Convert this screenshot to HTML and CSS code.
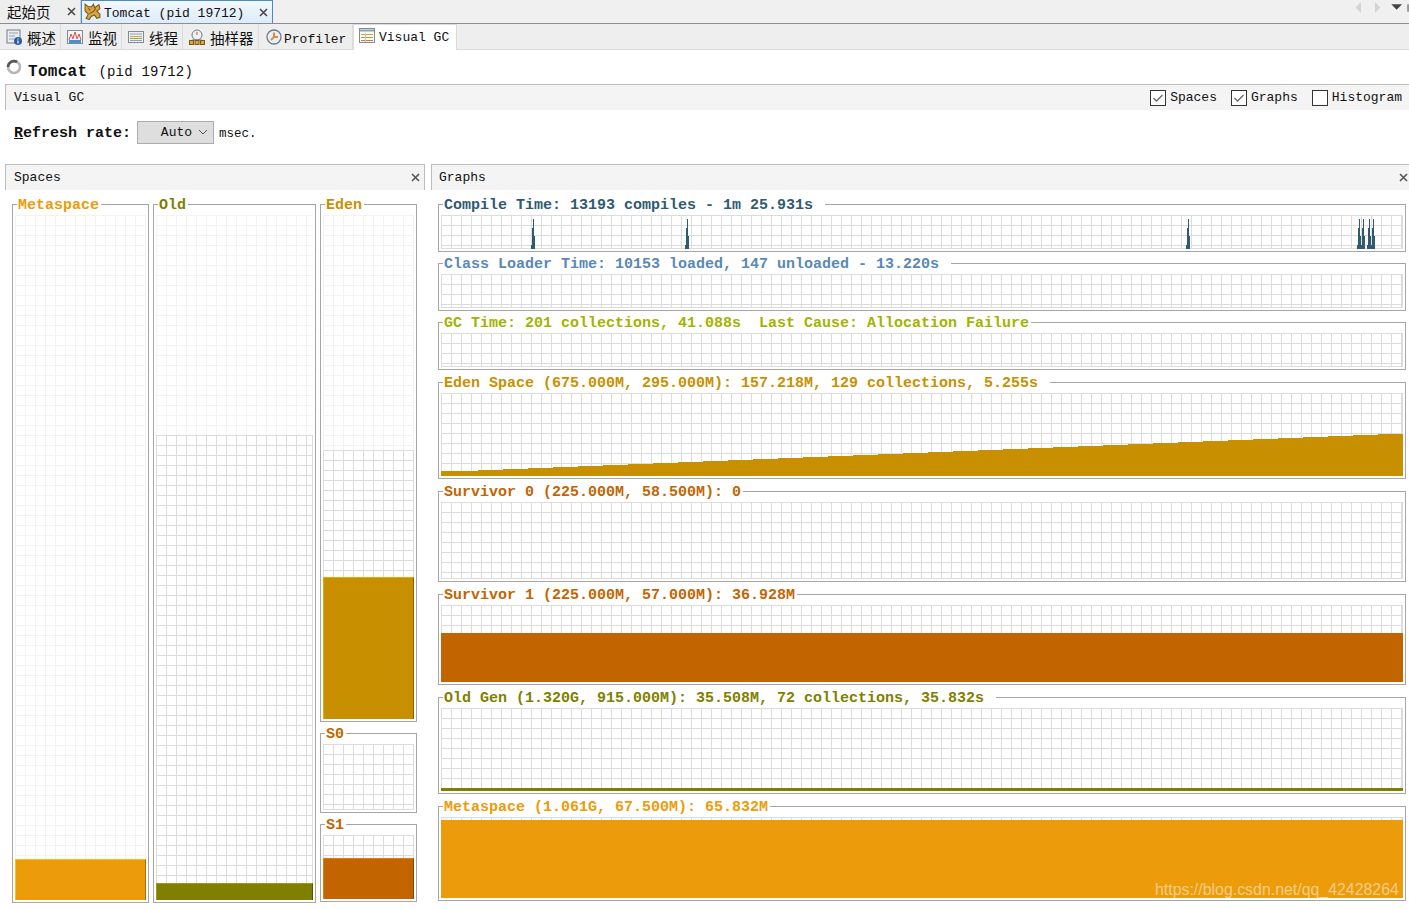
FILE: index.html
```html
<!DOCTYPE html>
<html lang="zh">
<head>
<meta charset="utf-8">
<title>Tomcat (pid 19712) - Visual GC</title>
<link rel="stylesheet" href="styles.css">
</head>
<body>
<svg class="defs" width="0" height="0"><defs><path id="spike" d="M0 34V30H1V13H2V4H3V21H4V34Z"/></defs></svg>

<header class="doc-tabs">
  <div class="doc-tab first"><span class="cjk">起始页</span><svg class="close" viewBox="0 0 9 9"><path d="M1 1l7 7M8 1l-7 7"/></svg></div>
  <div class="doc-tab active">
    <svg class="ico cat" viewBox="0 0 16 16"><path d="M1 1l3 2.500h3L9 1l1 3.500 4-3 1 4-3 2 3 3 0 3-3 1-2-3-3 1-2 3-3-1 2-4-3-3z" fill="#d9a441" stroke="#7a5a1c" stroke-width="1"/><path d="M4 5l2 2M11 5l-2 3M5 10l4-2" stroke="#7a5a1c" fill="none"/></svg>
    <span class="tab-text">Tomcat (pid 19712)</span>
    <svg class="close" viewBox="0 0 9 9"><path d="M1 1l7 7M8 1l-7 7"/></svg>
  </div>
  <div class="doc-nav">
    <svg class="nav-ico" viewBox="0 0 50 12"><path d="M6 1v10L1 6zM19 1v10l5-5z" fill="#d4d4d4"/><path d="M34 3h10l-5 5z" fill="#444"/><path d="M49.500 3v7" stroke="#555" fill="none"/></svg>
  </div>
</header>

<nav class="sub-tabs">
  <div class="sub-tab t1">
    <svg class="ico" viewBox="0 0 16 16"><rect x="1" y="1" width="13" height="13" fill="#e8eef3" stroke="#6f7f8c"/><path d="M3 4h9M3 7h6M3 10h5" stroke="#8fa0ae"/><circle cx="12" cy="12" r="4" fill="#2d5f9e"/><path d="M12 9.500v1M12 11.500v3" stroke="#fff" stroke-width="1.200"/></svg>
    <span class="cjk">概述</span></div>
  <div class="sub-tab t2">
    <svg class="ico" viewBox="0 0 16 16"><rect x="0.500" y="1.500" width="15" height="13" fill="#f2f4f6" stroke="#7f8c97"/><path d="M2 11l2-6 2 5 2-7 2 7 2-5 2 6" stroke="#d8534f" fill="none"/><path d="M2 14v-3h12v3z" fill="#4a90d0"/></svg>
    <span class="cjk">监视</span></div>
  <div class="sub-tab t3">
    <svg class="ico" viewBox="0 0 16 16"><rect x="0.500" y="2.500" width="15" height="11" fill="#eef0f1" stroke="#7f8c97"/><path d="M2 5h12" stroke="#8fa0ae"/><path d="M2 7.500h12" stroke="#d9a441"/><path d="M2 9.500h12" stroke="#7fb04a"/><path d="M2 11.500h12" stroke="#8fa0ae"/></svg>
    <span class="cjk">线程</span></div>
  <div class="sub-tab t4">
    <svg class="ico" viewBox="0 0 16 16"><circle cx="8" cy="6" r="5" fill="#eef1f3" stroke="#6f7f8c"/><path d="M8 6V3" stroke="#c0563a"/><path d="M3 11H13" stroke="#777"/><rect x="0.500" y="11.500" width="4" height="4" fill="#d9a441" stroke="#7a5a1c"/><rect x="6" y="11.500" width="4" height="4" fill="#d9a441" stroke="#7a5a1c"/><rect x="11.500" y="11.500" width="4" height="4" fill="#d9a441" stroke="#7a5a1c"/></svg>
    <span class="cjk">抽样器</span></div>
  <div class="sub-tab t5">
    <svg class="ico" viewBox="0 0 16 16"><circle cx="8" cy="8" r="7" fill="#e9eff4" stroke="#6a7d8c" stroke-width="1.300"/><path d="M8 8V3.500M8 8l-3 3M8 8h4" stroke="#e08a3c" stroke-width="2" fill="none"/></svg>
    <span class="latin">Profiler</span></div>
  <div class="sub-tab t6 selected">
    <svg class="ico" viewBox="0 0 16 16"><rect x="0.500" y="0.500" width="15" height="14" fill="#fbfbf4" stroke="#7f8c97"/><path d="M1 2.500h14" stroke="#8fa0ae" stroke-width="2"/><path d="M2 6.500h12" stroke="#e0a030"/><path d="M2 9.500h12" stroke="#7fb04a"/><path d="M2 12.500h12" stroke="#d8734f"/><path d="M6.500 5v9" stroke="#c8c8c8"/></svg>
    <span class="latin">Visual GC</span></div>
</nav>

<h1 class="app-title">
  <svg class="spin" viewBox="0 0 16 16"><circle cx="8" cy="8" r="6" fill="none" stroke="#b4b7ba" stroke-width="2.600"/><path d="M2 8a6 6 0 0 1 9-5" fill="none" stroke="#55585c" stroke-width="2.600"/></svg>
  <b>Tomcat</b><span class="pid">(pid 19712)</span>
</h1>

<section class="section-bar">
  <span>Visual GC</span>
  <div class="checks">
    <label class="check"><svg viewBox="0 0 16 16"><rect x="0.500" y="0.500" width="15" height="15" fill="#fff" stroke="#333"/><path d="M3.500 8l3 3 6-6" fill="none" stroke="#666" stroke-width="1.300"/></svg>Spaces</label>
    <label class="check"><svg viewBox="0 0 16 16"><rect x="0.500" y="0.500" width="15" height="15" fill="#fff" stroke="#333"/><path d="M3.500 8l3 3 6-6" fill="none" stroke="#666" stroke-width="1.300"/></svg>Graphs</label>
    <label class="check"><svg viewBox="0 0 16 16"><rect x="0.500" y="0.500" width="15" height="15" fill="#fff" stroke="#333"/></svg>Histogram</label>
  </div>
</section>

<div class="refresh">
  <b class="refresh-label"><u>R</u>efresh rate:</b>
  <div class="select"><span class="select-value">Auto</span><svg viewBox="0 0 10 6"><path d="M1 1l4 4 4-4" fill="none" stroke="#555"/></svg></div>
  <span class="msec">msec.</span>
</div>

<main class="panels">
  <section class="panel spaces">
    <div class="panel-head"><span>Spaces</span><svg class="x" viewBox="0 0 9 9"><path d="M1 1l7 7M8 1l-7 7"/></svg></div>
    <div class="spaces-body">
      <div class="frame col-meta c-meta">
        <div class="legend">Metaspace</div>
        <div class="plot soft"><div class="fill f-meta h-meta"></div></div>
      </div>
      <div class="frame col-old c-old">
        <div class="legend">Old</div>
        <div class="plot plain">
          <div class="unused u-old"></div>
          <div class="used"><div class="fill f-old h-old"></div></div>
        </div>
      </div>
      <div class="stack">
        <div class="frame fr-eden c-eden">
          <div class="legend">Eden</div>
          <div class="plot plain">
            <div class="unused u-eden"></div>
            <div class="used"><div class="fill f-eden h-eden"></div></div>
          </div>
        </div>
        <div class="frame fr-s0 c-surv">
          <div class="legend">S0</div>
          <div class="plot"></div>
        </div>
        <div class="frame fr-s1 c-surv">
          <div class="legend">S1</div>
          <div class="plot"><div class="fill f-surv h-s1"></div></div>
        </div>
      </div>
    </div>
  </section>

  <section class="panel graphs">
    <div class="panel-head"><span>Graphs</span><svg class="x" viewBox="0 0 9 9"><path d="M1 1l7 7M8 1l-7 7"/></svg></div>
    <div class="graphs-body">
      <div class="frame g-small tight c-comp">
        <div class="legend wide">Compile Time: 13193 compiles - 1m 25.931s</div>
        <div class="plot">
          <svg class="chart" viewBox="0 0 962 34" fill="#2f5a70">
            <use href="#spike" x="90"/><use href="#spike" x="244"/><use href="#spike" x="745"/>
            <use href="#spike" x="916"/><use href="#spike" x="920"/><use href="#spike" x="926"/><use href="#spike" x="930"/>
          </svg>
        </div>
      </div>
      <div class="frame g-small tight c-class">
        <div class="legend wide">Class Loader Time: 10153 loaded, 147 unloaded - 13.220s</div>
        <div class="plot"></div>
      </div>
      <div class="frame g-small c-gc">
        <div class="legend">GC Time: 201 collections, 41.088s  Last Cause: Allocation Failure</div>
        <div class="plot"></div>
      </div>
      <div class="frame g-large c-eden">
        <div class="legend wide">Eden Space (675.000M, 295.000M): 157.218M, 129 collections, 5.255s</div>
        <div class="plot">
          <svg class="chart" viewBox="0 0 962 83"><path fill="#c89000" d="M0 83V78h12
            h25v-1h25v-1h25v-1h25v-1h25v-1h25v-1h25v-1h25v-1h25v-1h25v-1
            h25v-1h25v-1h25v-1h25v-1h25v-1h25v-1h25v-1h25v-1h25v-1h25v-1
            h25v-1h25v-1h25v-1h25v-1h25v-1h25v-1h25v-1h25v-1h25v-1h25v-1
            h25v-1h25v-1h25v-1h25v-1h25v-1h25v-1h25v-1h25v-1V83Z"/></svg>
        </div>
      </div>
      <div class="frame g-mid c-surv">
        <div class="legend">Survivor 0 (225.000M, 58.500M): 0</div>
        <div class="plot"></div>
      </div>
      <div class="frame g-mid c-surv">
        <div class="legend">Survivor 1 (225.000M, 57.000M): 36.928M</div>
        <div class="plot"><div class="fill flat-surv h-gs1"></div></div>
      </div>
      <div class="frame g-large c-old">
        <div class="legend wide">Old Gen (1.320G, 915.000M): 35.508M, 72 collections, 35.832s</div>
        <div class="plot"><div class="fill flat-old h-gold"></div></div>
      </div>
      <div class="frame g-meta c-meta">
        <div class="legend">Metaspace (1.061G, 67.500M): 65.832M</div>
        <div class="plot"><div class="fill flat-meta h-gmeta"></div></div>
      </div>
    </div>
  </section>
</main>
<div class="watermark">https://blog.csdn.net/qq_42428264</div>
</body>
</html>
```
FILE: styles.css
```css
* { box-sizing: border-box; }
html, body { margin: 0; height: 100%; }
body {
  width: 1409px; height: 909px; overflow: hidden; position: relative;
  background: #fff; color: #111;
  font: 13px/16px "Liberation Mono", "Noto Sans CJK SC", monospace;
}
.defs { position: absolute; }
.cjk { font: 14.500px/18px "Noto Sans CJK SC", "Liberation Sans", sans-serif; color: #111; }
.sub-tab .cjk { padding-top: 2px; }
.ico { width: 16px; height: 16px; flex: none; display: block; }

/* document tabs */
.doc-tabs { display: flex; height: 24px; background: #f0f0f0; border-bottom: 1px solid #8c8c96; }
.doc-tab { display: flex; align-items: center; height: 23px; }
.doc-tab.first { width: 81px; padding: 0 4px 0 7px; justify-content: space-between; background: #eeeeee; border-right: 1px solid #cfcfcf; }
.doc-tab.active { width: 192px; padding: 1px 4px 0 2px; background: linear-gradient(#f2f8fd, #dcecfa); border: 1px solid #4a8cc0; border-bottom: 0; }
.cat { width: 17px; height: 17px; margin-top: -3px; }
.tab-text { margin-left: 3px; flex: 1; padding-top: 2px; }
.close { width: 9px; height: 9px; stroke: #444; stroke-width: 1.500; fill: none; flex: none; }
.doc-nav { margin-left: auto; display: flex; align-items: flex-start; padding-top: 1px; }
.nav-ico { width: 55px; height: 13px; display: block; }

/* tool tabs */
.sub-tabs { display: flex; height: 26px; background: #eeeeee; border-bottom: 1px solid #dcdcdc; }
.sub-tab { display: flex; align-items: center; height: 25px; gap: 5px; padding-left: 6px; border-right: 1px solid #dcdcdc; }
.t1, .t2, .t3 { width: 61px; }
.t4 { width: 76px; }
.t5 { width: 94px; padding-left: 7px; gap: 2px; }
.t5 .latin { padding-top: 6px; }
.t6 { width: 104px; gap: 4px; }
.t6 .latin { padding-top: 4px; }
.selected { height: 26px; background: #fff; border: 1px solid #dcdcdc; border-bottom: 0; padding: 0 0 3px 5px; position: relative; top: 1px; margin-top: -1px; }

/* heading */
.app-title { display: flex; align-items: center; height: 34px; margin: 0; padding: 10px 0 0 6px; font-size: 16px; font-weight: normal; }
.spin { width: 16px; height: 16px; margin: -10px 6px 0 0; flex: none; }
.app-title b { font-weight: bold; letter-spacing: .3px; }
.pid { margin-left: 11px; font-size: 14px; letter-spacing: .2px; }

.section-bar { display: flex; align-items: center; justify-content: space-between; height: 26px; margin-left: 5px; padding: 0 7px 0 8px; background: #f4f4f4; border-top: 1px solid #bdbdbd; border-left: 1px solid #bdbdbd; }
.checks { display: flex; gap: 14px; }
.check { display: flex; align-items: center; gap: 4px; }
.check svg { width: 16px; height: 16px; display: block; }

.refresh { display: flex; align-items: center; height: 54px; padding: 0 0 10px 14px; }
.refresh-label, .msec { padding-top: 4px; }
.refresh-label { font-size: 15px; }
.select { display: flex; align-items: center; justify-content: flex-end; gap: 5px; width: 77px; height: 23px; margin: 0 5px 0 6px; padding-right: 5px; background: #dedede; border: 1px solid #adadad; }
.select-value { margin-right: 1px; padding-top: 2px; }
.select svg { width: 10px; height: 6px; }
.msec { font-size: 12.500px; }

/* panels */
.panels { display: flex; gap: 6px; padding-left: 5px; }
.panel { display: flex; flex-direction: column; }
.spaces { width: 420px; }
.graphs { width: 978px; }
.panel-head { display: flex; align-items: center; justify-content: space-between; height: 26px; padding: 0 4px 0 8px; background: #f4f4f4; border: 1px solid #bdbdbd; border-bottom: 0; }
.graphs .panel-head { border-right: 0; padding: 0 1px 0 7px; }
.x { width: 9px; height: 9px; stroke: #555; stroke-width: 1.600; fill: none; }

.spaces-body { display: flex; gap: 4px; padding: 14px 0 0 7px; }
.graphs-body { display: flex; flex-direction: column; padding: 14px 3px 0 7px; }
.stack { display: flex; flex-direction: column; gap: 11px; width: 97px; }

/* titled frames */
.frame { display: flex; flex-direction: column; padding: 0 2px 2px; border: 1px solid #a6a6a6; background: #fff; }
.legend { align-self: flex-start; height: 18px; margin: -9px 0 1px 2px; padding: 0 2px 0 1px; background: #fff; font: bold 15px/20px "Liberation Mono", monospace; white-space: pre; }
.legend.wide { padding-right: 12px; }
.col-meta { width: 137px; height: 699px; }
.col-old { width: 163px; height: 699px; }
.fr-eden { height: 518px; }
.fr-s0 { height: 80px; }
.fr-s1 { height: 78px; }
.g-small { height: 48px; margin-bottom: 12px; }
.g-small.tight { margin-bottom: 11px; }
.g-large { height: 97px; margin-bottom: 12px; }
.g-mid { height: 91px; margin-bottom: 12px; }
.g-meta { height: 95px; }

.c-meta .legend { color: #ec9b0a; }
.c-old .legend { color: #808000; }
.c-eden .legend { color: #c89000; }
.c-surv .legend { color: #c26500; }
.c-comp .legend { color: #2f5a70; }
.c-class .legend { color: #5a88b5; }
.c-gc .legend { color: #a3b300; }

/* grid plots */
.plot, .used, .unused {
  background-image: linear-gradient(to right, var(--grid) 1px, transparent 1px), linear-gradient(to bottom, var(--grid) 1px, transparent 1px);
  background-size: 10px 10px;
}
.plot { --grid: #dcdcdc; flex: 1; min-height: 0; display: flex; flex-direction: column; justify-content: flex-end; box-shadow: inset -1px -1px 0 var(--grid); }
.plot.soft { --grid: #f3f3f3; }
.plot.plain { background-image: none; box-shadow: none; }
.unused { --grid: #f3f3f3; flex: none; }
.used { --grid: #dcdcdc; flex: 1; display: flex; flex-direction: column; justify-content: flex-end; box-shadow: inset -1px 0 0 var(--grid); }
.u-old { height: 220px; }
.u-eden { height: 235px; }
.chart { display: block; width: 100%; height: 100%; }

.fill { flex: none; }
.f-meta { background: #ec9b0a; border-top: 1px solid #fbc014; border-left: 1px solid #fbc014; border-right: 1px solid #a56c07; }
.f-old { background: #808000; border-top: 1px solid #9c9c10; border-left: 1px solid #9c9c10; border-right: 1px solid #555500; }
.f-eden { background: #c89000; border-top: 1px solid #e8ac00; border-left: 1px solid #e8ac00; border-right: 1px solid #8c6500; }
.f-surv { background: #c26500; border-top: 1px solid #e87a00; border-left: 1px solid #e87a00; border-right: 1px solid #884700; }
.flat-surv { background: #c26500; }
.flat-old { background: #808000; }
.flat-meta { background: #ec9b0a; }
.h-meta { height: 41px; }
.h-old { height: 17px; }
.h-eden { height: 142px; }
.h-s1 { height: 41px; }
.h-gs1 { height: 49px; }
.h-gold { height: 3px; }
.h-gmeta { height: 78px; }

.watermark { position: absolute; left: 1155px; top: 881px; font: 15.900px/18px "Liberation Sans", sans-serif; color: rgba(255, 255, 255, .5); white-space: nowrap; }
```
